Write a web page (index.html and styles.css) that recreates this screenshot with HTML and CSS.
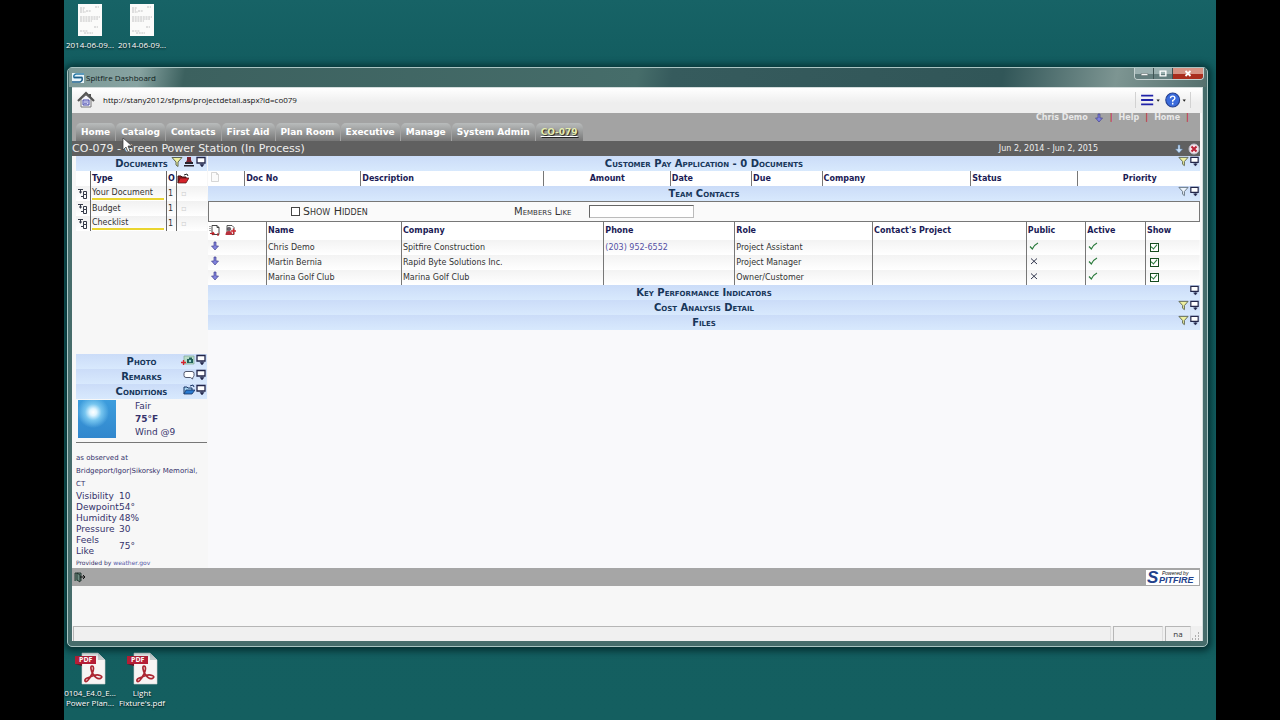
FILE: index.html
```html
<!DOCTYPE html>
<html lang="en">
<head>
<meta charset="utf-8">
<title>Spitfire Dashboard</title>
<link rel="stylesheet" href="styles.css">
</head>
<body>
<svg class="defs" aria-hidden="true">
  <symbol id="funnel" viewBox="0 0 12 12"><path d="M1 1.500h10L7 6v4.500L5 9V6z" fill="#eef0a0" stroke="#5d6650"/></symbol>
  <symbol id="funnel-clear" viewBox="0 0 12 12"><path d="M1 1.500h10L7 6v4.500L5 9V6z" fill="#eef5fc" stroke="#60707c"/></symbol>
  <symbol id="drop" viewBox="0 0 12 12"><path d="M2 1.500h8v5.500H2z" fill="#fff" stroke="#22264a" stroke-width="1.300"/><path d="M7 7v2M5 8.500h4L7 11z" fill="#22264a" stroke="#22264a" stroke-width=".5"/></symbol>
  <symbol id="stamp" viewBox="0 0 12 12"><path d="M4 1h4v3l1 2H3l1-2z" fill="#7b2431"/><path d="M2 6h8v2H2zM1 9h10v1.500H1z" fill="#26232e"/></symbol>
  <symbol id="folder-red" viewBox="0 0 12 12"><path d="M1 10V3h3l1 1h4v2" fill="#9c171c" stroke="#3a1515"/><path d="M1 10l2-5h9l-3 5z" fill="#d4232a" stroke="#4a1212" stroke-width=".7"/><path d="M7 2l3-1 1 2" fill="none" stroke="#222"/></symbol>
  <symbol id="folder-blue" viewBox="0 0 12 12"><path d="M1 10V3h3l1 1h4v2" fill="#a8d4f2" stroke="#173463"/><path d="M1 10l2-4h9l-3 4z" fill="#2b7bd0" stroke="#173463" stroke-width=".8"/><path d="M7 2l3-1 1 2" fill="none" stroke="#173463"/></symbol>
  <symbol id="photo" viewBox="0 0 14 12"><path d="M3 2h10v8H3z" fill="#b9dcc7" stroke="#7da795" stroke-width=".7"/><path d="M6 5h6v4H6zM8 3.500h3V5H8z" fill="#1f5f58"/><circle cx="9" cy="7" r="1.200" fill="#a7d8d7"/><path d="M0 8.500h5M2.500 6v5" stroke="#d5222c" stroke-width="1.300"/></symbol>
  <symbol id="bubble" viewBox="0 0 12 12"><path d="M3 2.500h6a2 2 0 0 1 2 2v2a2 2 0 0 1-1 1.600L9.500 10 7.500 8.500H3a2 2 0 0 1-2-2v-2a2 2 0 0 1 2-2z" fill="#fff" stroke="#40465e" stroke-width=".9"/></symbol>
  <symbol id="tree" viewBox="0 0 12 12"><path d="M2 1.500h5M4.500 1.500v4M3 4h3M7.500 3.500h3v3h-3zM7.500 6.500h3v4h-3zM5 8.500h2.500" fill="none" stroke="#343a48"/></symbol>
  <symbol id="down" viewBox="0 0 10 10"><path d="M4 1h2v4h2.500L5 9 1.500 5H4z" fill="#7f82dc" stroke="#45448f" stroke-width=".7"/></symbol>
  <symbol id="down-light" viewBox="0 0 10 10"><path d="M4 1h2v4h2.500L5 9 1.500 5H4z" fill="#c6ddf5" stroke="#5a83ad" stroke-width=".5"/></symbol>
  <symbol id="page" viewBox="0 0 10 12"><path d="M1.500 1.500h5l2 2v7h-7zM6.500 1.500v2h2" fill="#fbfbfb" stroke="#ccc" stroke-width=".8"/></symbol>
  <symbol id="page-add" viewBox="0 0 12 12"><path d="M3 1.500h5l2 2v7H3zM8 1.500v2h2" fill="#fff" stroke="#333" stroke-width=".9"/><path d="M1 2v6" stroke="#555" stroke-dasharray="1 1"/><path d="M1 9.500h4M3.500 8L5 9.500 3.500 11M9 9v3" stroke="#bd2026" fill="none" stroke-width="1.200"/></symbol>
  <symbol id="people-add" viewBox="0 0 12 12"><path d="M3 1.500h5l2 2v7H3z" fill="#fff" stroke="#444" stroke-width=".9"/><circle cx="5" cy="5" r="1.800" fill="#6a6370" stroke="#333" stroke-width=".5"/><path d="M1.500 11q0-4 3.500-4t3 4z" fill="#b8323e"/><path d="M7 7h5M9.500 4.500v6" stroke="#cc2831" stroke-width="1.400"/></symbol>
  <symbol id="check" viewBox="0 0 10 10"><path d="M1 5.500L3.300 8Q5 4 9 2" fill="none" stroke="#28793a" stroke-width="1.200"/></symbol>
  <symbol id="cross" viewBox="0 0 10 10"><path d="M2 2.500l6 5.500M8 2.500L2 8" fill="none" stroke="#33384f"/></symbol>
  <symbol id="pdf" viewBox="0 0 32 34"><path d="M8 1h16l7 7v24H8z" fill="#f7f5f4" stroke="#d5d5d5" stroke-width=".6"/><path d="M24 1v7h7z" fill="#c7cecf"/><path d="M1 4h21v8H1z" fill="#b51e36"/><path d="M1 12h7v2z" fill="#6c1422"/><path d="M18 14c-2 0-1 5 1 8s5 6 8 4-3-4-7-2.500-10 3-9 5.500 5-3 7-7 2-8 0-8z" fill="none" stroke="#ac2631" stroke-width="1.700"/></symbol>
  <symbol id="doc" viewBox="0 0 26 34"><path d="M1 1h24v32H1z" fill="#fbfbfa"/><path d="M3 5h5M3 7h4M3 9h6M9 8h5M18 4h4M3 14h20M3 16h18M3 18h12M17 24h4M3 28h8M7 30h9" stroke="#aaa" stroke-width=".7" stroke-dasharray="2 .7"/></symbol>
  <symbol id="spitfire" viewBox="0 0 12 12"><path d="M0 1h12v10H0z" fill="#e9f5fb"/><path d="M12 2H4Q1 3 2 5.500h8" fill="none" stroke="#2b7ba6" stroke-width="1.500"/><path d="M0 10h8q3-1 2-4.500H2" fill="none" stroke="#1d5f8a" stroke-width="1.500"/></symbol>
</svg>

<main class="desktop">
  <div class="files files-top">
    <figure class="file"><svg class="doc-icon"><use href="#doc"/></svg><figcaption>2014-06-09...</figcaption></figure>
    <figure class="file"><svg class="doc-icon"><use href="#doc"/></svg><figcaption>2014-06-09...</figcaption></figure>
  </div>
  <div class="files files-bottom">
    <figure class="file"><span class="pdf"><svg class="pdf-icon"><use href="#pdf"/></svg><span class="pdf-tag">PDF</span></span><figcaption>0104_E4.0_E...<br>Power Plan...</figcaption></figure>
    <figure class="file"><span class="pdf"><svg class="pdf-icon"><use href="#pdf"/></svg><span class="pdf-tag">PDF</span></span><figcaption>Light<br>Fixture's.pdf</figcaption></figure>
  </div>

  <section class="window">
    <header class="titlebar">
      <svg class="i12"><use href="#spitfire"/></svg><span class="caption">Spitfire Dashboard</span>
      <div class="controls">
        <button aria-label="Minimize"><svg viewBox="0 0 19 11"><path d="M6.500 5.500h7v2h-7z" fill="#fff" stroke="#4c5a5a" stroke-width=".5"/></svg></button>
        <button aria-label="Maximize"><svg viewBox="0 0 19 11"><path d="M6.500 3h6v5h-6z" fill="none" stroke="#fff" stroke-width="1.500"/></svg></button>
        <button class="close" aria-label="Close"><svg viewBox="0 0 30 11"><path d="M12.500 3l5 5M17.500 3l-5 5" stroke="#fff" stroke-width="1.800"/></svg></button>
      </div>
    </header>

    <div class="client">
      <div class="toolbar">
        <svg class="home" viewBox="0 0 18 18"><path d="M13 3v4" stroke="#555" stroke-width="2"/><path d="M4 8v8h10V8L9 4z" fill="#f4f4fa" stroke="#777"/><path d="M1 10l8-8 8 8" fill="none" stroke="#555" stroke-width="2.200"/><path d="M6 9h6v5H6z" fill="#dedff8" stroke="#4547a7"/><path d="M7 11h4M7 12.500h3" stroke="#5a5cb6" stroke-width=".7"/></svg>
        <span class="url">http://stany2012/sfpms/projectdetail.aspx?id=co079</span>
        <div class="tools">
          <button aria-label="Menu"><svg viewBox="0 0 20 14"><path d="M1 3h11M1 7h11M1 11h11" stroke="#2023a8" stroke-width="1.700"/><path d="M15 6.500h3l-1.500 2z" fill="#222"/></svg></button>
          <button aria-label="Help"><svg viewBox="0 0 20 14"><circle cx="7" cy="7" r="6.300" fill="#3a6bdc" stroke="#27418f"/><path d="M5 5.500Q5 3.500 7 3.500t2 2Q9 6.500 7 7.500v1M7 9.500v1.500" fill="none" stroke="#fff" stroke-width="1.300"/><path d="M16 6.500h3L17.500 8.500z" fill="#222"/></svg></button>
        </div>
      </div>

      <div class="page">
        <div class="masthead">
          <div class="user"><a href="#">Chris Demo</a><svg class="i10"><use href="#down"/></svg><i>|</i><a href="#">Help</a><i>|</i><a href="#">Home</a><i>|</i></div>
          <nav class="tabs">
            <a href="#">Home</a><a href="#">Catalog</a><a href="#">Contacts</a><a href="#">First Aid</a><a href="#">Plan Room</a><a href="#">Executive</a><a href="#">Manage</a><a href="#">System Admin</a><a href="#" class="current">CO-079</a>
          </nav>
        </div>
        <div class="project">
          <h1>CO-079 - Green Power Station (In Process)</h1>
          <span class="dates">Jun 2, 2014 - Jun 2, 2015</span>
          <svg class="i10"><use href="#down-light"/></svg>
          <button class="icon-btn" aria-label="Close project"><svg class="i12" viewBox="0 0 12 12"><circle cx="6" cy="6" r="5" fill="#f7e4e8" stroke="#b8bac9"/><path d="M3.500 3.500l5 5M8.500 3.500l-5 5" stroke="#b92238" stroke-width="2"/></svg></button>
        </div>

        <div class="content">
          <aside class="side">
            <h2 class="bar"><span>Documents</span><b class="icons"><svg><use href="#funnel"/></svg><svg><use href="#stamp"/></svg><svg><use href="#drop"/></svg></b></h2>
            <table class="docs">
              <colgroup><col class="d1"><col class="d2"><col class="d3"><col class="d4"></colgroup>
              <thead><tr><th></th><th>Type</th><th>O</th><th><svg class="i12"><use href="#folder-red"/></svg></th></tr></thead>
              <tbody>
                <tr><td><svg class="i12"><use href="#tree"/></svg></td><td><span class="mark">Your Document</span></td><td>1</td><td class="dot">▫</td></tr>
                <tr><td><svg class="i12"><use href="#tree"/></svg></td><td>Budget</td><td>1</td><td class="dot">▫</td></tr>
                <tr><td><svg class="i12"><use href="#tree"/></svg></td><td><span class="mark">Checklist</span></td><td>1</td><td class="dot">▫</td></tr>
              </tbody>
            </table>
            <div class="lower">
              <h2 class="bar"><span>Photo</span><b class="icons"><svg class="wide"><use href="#photo"/></svg><svg><use href="#drop"/></svg></b></h2>
              <h2 class="bar"><span>Remarks</span><b class="icons"><svg><use href="#bubble"/></svg><svg><use href="#drop"/></svg></b></h2>
              <h2 class="bar"><span>Conditions</span><b class="icons"><svg><use href="#folder-blue"/></svg><svg><use href="#drop"/></svg></b></h2>
              <div class="weather"><div class="sky"></div><p>Fair<br><strong>75°F</strong><br>Wind @9</p></div>
              <p class="observed">as observed at<br>Bridgeport/Igor|Sikorsky Memorial, CT</p>
              <table class="facts">
                <tr><td>Visibility</td><td>10</td></tr><tr><td>Dewpoint</td><td>54°</td></tr><tr><td>Humidity</td><td>48%</td></tr><tr><td>Pressure</td><td>30</td></tr><tr><td>Feels<br>Like</td><td>75°</td></tr>
              </table>
              <p class="credit">Provided by <a href="#">weather.gov</a></p>
            </div>
          </aside>

          <div class="panels">
            <h2 class="bar"><span>Customer Pay Application - 0 Documents</span><b class="icons"><svg><use href="#funnel"/></svg><svg><use href="#drop"/></svg></b></h2>
            <table class="grid pay">
              <colgroup><col class="p1"><col class="p2"><col class="p3"><col class="p4"><col class="p5"><col class="p6"><col class="p7"><col class="p8"><col></colgroup>
              <tr><th><svg class="i12"><use href="#page"/></svg></th><th>Doc No</th><th>Description</th><th class="mid">Amount</th><th>Date</th><th>Due</th><th>Company</th><th>Status</th><th class="mid">Priority</th></tr>
            </table>
            <h2 class="bar"><span>Team Contacts</span><b class="icons"><svg><use href="#funnel-clear"/></svg><svg><use href="#drop"/></svg></b></h2>
            <form class="search">
              <label class="hidden-opt"><input type="checkbox">Show Hidden</label>
              <label class="like">Members Like<input type="text"></label>
            </form>
            <table class="grid team">
              <colgroup><col class="t1"><col class="t2"><col class="t3"><col class="t4"><col class="t5"><col class="t6"><col class="t7"><col class="t8"><col></colgroup>
              <thead><tr><th><svg class="i12"><use href="#page-add"/></svg> <svg class="i12"><use href="#people-add"/></svg></th><th>Name</th><th>Company</th><th>Phone</th><th>Role</th><th>Contact's Project</th><th>Public</th><th>Active</th><th>Show</th></tr></thead>
              <tbody>
                <tr><td><svg class="i10"><use href="#down"/></svg></td><td>Chris Demo</td><td>Spitfire Construction</td><td><a href="#">(203) 952-6552</a></td><td>Project Assistant</td><td></td><td><svg class="i10"><use href="#check"/></svg></td><td><svg class="i10"><use href="#check"/></svg></td><td><input type="checkbox" checked aria-label="Show Chris Demo"></td></tr>
                <tr><td><svg class="i10"><use href="#down"/></svg></td><td>Martin Bernia</td><td>Rapid Byte Solutions Inc.</td><td></td><td>Project Manager</td><td></td><td><svg class="i10"><use href="#cross"/></svg></td><td><svg class="i10"><use href="#check"/></svg></td><td><input type="checkbox" checked aria-label="Show Martin Bernia"></td></tr>
                <tr><td><svg class="i10"><use href="#down"/></svg></td><td>Marina Golf Club</td><td>Marina Golf Club</td><td></td><td>Owner/Customer</td><td></td><td><svg class="i10"><use href="#cross"/></svg></td><td><svg class="i10"><use href="#check"/></svg></td><td><input type="checkbox" checked aria-label="Show Marina Golf Club"></td></tr>
              </tbody>
            </table>
            <h2 class="bar"><span>Key Performance Indicators</span><b class="icons"><svg><use href="#drop"/></svg></b></h2>
            <h2 class="bar"><span>Cost Analysis Detail</span><b class="icons"><svg><use href="#funnel"/></svg><svg><use href="#drop"/></svg></b></h2>
            <h2 class="bar"><span>Files</span><b class="icons"><svg><use href="#funnel"/></svg><svg><use href="#drop"/></svg></b></h2>
          </div>
        </div>

        <footer class="foot">
          <button class="icon-btn" aria-label="Exit"><svg class="i12" viewBox="0 0 12 12"><path d="M2 10V2h6v8M4 2l3 2v7L4 9z" fill="#6d8c82" stroke="#1e2c28" stroke-width=".9"/><path d="M7 6h5M10 4l2 2-2 2" fill="none" stroke="#111"/></svg></button>
          <div class="brand"><b class="initial">S</b><span class="powered">Powered by</span><span class="word">PITFIRE</span></div>
        </footer>
      </div>
      <div class="status"><span></span><span class="s2"></span><span class="s3">na</span><svg class="i10" viewBox="0 0 10 10"><path d="M7 2h1M4 5h1M7 5h1M1 8h1M4 8h1M7 8h1" stroke="#999" stroke-width="1.500"/></svg></div>
    </div>
  </section>

  <svg class="cursor" viewBox="0 0 12 18"><path d="M1 1v12l3-3 2 5 2-1-2-5h4z" fill="#fff" stroke="#333" stroke-width=".7"/></svg>
</main>
</body>
</html>
```
FILE: styles.css
```css
* { box-sizing: border-box; }
body { margin: 0; background: #000; font: 8px/14px "DejaVu Sans", Verdana, sans-serif; color: #333; }
a { color: inherit; text-decoration: none; }
h1, h2, p, figure { margin: 0; }
button { border: 0; padding: 0; background: none; display: flex; }
table { border-collapse: collapse; table-layout: fixed; width: 100%; }
th, td { padding: 0; text-align: left; }
.defs { position: absolute; width: 0; height: 0; }
.i12 { width: 12px; height: 12px; vertical-align: middle; flex: none; }
.i10 { width: 10px; height: 10px; vertical-align: middle; flex: none; }

.desktop { position: relative; margin: 0 5%; min-height: 100vh; background: linear-gradient(#176366, #125c5f 10%, #145f60); overflow: hidden; }
.files { position: absolute; left: 0; display: flex; }
.files-top { top: 3px; }
.files-bottom { top: 652px; }
.file { width: 52px; display: flex; flex-direction: column; align-items: center; color: #fff; font: 8px/10px "Open Sans", "Noto Sans", sans-serif; text-align: center; text-shadow: 0 1px 2px #000; white-space: nowrap; }
.doc-icon { width: 26px; height: 34px; margin-bottom: 3px; }
.pdf { position: relative; display: block; width: 32px; height: 34px; margin-bottom: 2px; }
.pdf-icon { width: 32px; height: 34px; }
.pdf-tag { position: absolute; left: 5px; top: 3px; font: bold 7px/10px "Open Sans", sans-serif; text-shadow: none; }

.window { position: absolute; left: 3px; right: 8px; top: 67px; bottom: 73px; display: flex; flex-direction: column; padding: 1px 4px 5px; border: 1px solid #a9c4c2; border-radius: 5px; background: #466c6b; box-shadow: 0 1px 7px 3px #052f31; }
.titlebar { display: flex; align-items: center; gap: 2px; height: 19px; flex: none; margin: -1px -3px 0; padding-left: 3px; background: linear-gradient(100deg, #7d9a98 0, #87a3a1 70px, #3c615f 115px, #466d6a 50%, #365b5d 53%, #315658 82%, #7d9592 92%, #56706e); }
.caption { font: 8px/14px "Open Sans", "Noto Sans", sans-serif; color: #101c1c; }
.controls { display: flex; align-self: flex-start; margin-left: auto; margin-right: 2px; border: 1px solid #c5d1d1; border-top: 0; border-radius: 0 0 4px 4px; overflow: hidden; }
.controls button { width: 19px; height: 11px; border-right: 1px solid #3f5353; background: linear-gradient(#9bb0b0 50%, #647e7e 50%); }
.controls svg { width: 100%; height: 11px; }
.controls .close { width: 30px; border-right: 0; background: linear-gradient(#d69384 50%, #aa2d1d 50%); }

.client { flex: 1; min-height: 0; display: flex; flex-direction: column; background: #f7f7f7; border: solid #d4dddd; border-width: 1px 1px 0 0; }
.toolbar { display: flex; align-items: center; height: 25px; flex: none; padding: 0 0 2px 5px; background: linear-gradient(#fff, #eee 60%); }
.home { width: 18px; height: 18px; margin-right: 8px; }
.url { font: 8px/14px "Open Sans", "Noto Sans", sans-serif; color: #111; }
.tools { display: flex; gap: 3px; margin-left: auto; margin-right: 11px; padding: 0 3px 0 4px; border: solid #d2d2d2; border-width: 0 1px; }
.tools svg { width: 22px; height: 16px; }

.page { flex: 1; margin-right: 2px; }
.masthead { height: 28px; background: #a3a3a3; display: flex; flex-direction: column; justify-content: space-between; }
.user { display: flex; align-items: center; justify-content: flex-end; height: 10px; padding-right: 11px; color: #e8e8e8; font-weight: bold; gap: 6px; white-space: nowrap; }
.user i { font-style: normal; color: #cc3040; }
.tabs { display: flex; gap: 1px; padding-left: 4px; white-space: nowrap; }
.tabs a { height: 18px; padding: 0 5px; border-radius: 5px 5px 0 0; font: bold 9px/19px "DejaVu Sans", Verdana, sans-serif; color: #fff; background: linear-gradient(#b9bcbc, #777); }
.tabs .current { color: #e5ecae; text-decoration: underline; text-decoration-color: #fff; text-shadow: 1px 1px 1px #222; }
.project { display: flex; align-items: center; height: 15px; background: #606060; color: #eee; }
.project h1 { font: 11px/15px "DejaVu Sans", Verdana, sans-serif; white-space: nowrap; }
.dates { margin-left: auto; margin-right: 76px; line-height: 16px; }
.project .icon-btn { margin: 0 0 0 4px; }

.content { display: flex; padding: 0 0 0 4px; }
.side { width: 131px; flex: none; margin-right: 1px; display: flex; flex-direction: column; }
.panels { flex: 1; min-width: 0; background: #f9f9fb; }
.bar { display: grid; grid-template-columns: 1fr; align-items: center; height: 15px; font: bold small-caps 10px/15px "DejaVu Sans", Verdana, sans-serif; color: #173659; text-align: center; background: linear-gradient(#cbdcf8, #d8e9fd); white-space: nowrap; }
.bar > * { grid-area: 1 / 1; }
.icons { justify-self: end; align-self: start; display: flex; align-items: center; }
.icons svg { width: 12px; height: 12px; }
.icons .wide { width: 14px; }
.panels .icons svg { width: 11px; height: 11px; }
.docs { background: #fff; color: #333; }
.docs tr { height: 15px; }
.docs th { color: #17174f; }
.docs th + th, .docs td + td { border-left: 1px solid #666; padding-left: 1px; }
.docs th:last-child, .docs td:last-child { padding-left: 0; }
.docs svg { display: block; }
.docs tbody tr { background: linear-gradient(#f1f1f1, #fff); }
.d1 { width: 11%; } .d2 { width: 58%; } .d3 { width: 8%; } .d4 { width: 23%; }
.mark { display: block; height: 13px; line-height: 12px; margin-right: 2px; border-bottom: 2px solid #ead52f; }
.docs td.dot { color: #ccc; padding-left: 4px; }

.lower { margin-top: 123px; color: #35326b; }
.weather { display: flex; padding: 1px 2px 4px; border-bottom: 1px solid #777; height: 44px; }
.sky { width: 38px; height: 38px; background: radial-gradient(circle at 40% 32%, #fff 0, #e0f5ff 10%, #76c5ef 24%, transparent 46%), linear-gradient(#3d9ddd, #3187cd); }
.weather p { margin-left: 19px; font-size: 9px; line-height: 13px; }
.observed { padding-top: 9px; font-size: 7px; line-height: 13px; }
.facts { font-size: 9px; line-height: 11px; width: 70px; }
.facts td:first-child { width: 43px; }
.credit { font-size: 6px; line-height: 11px; }
.credit a { color: #5558a8; }

.grid { background: #fff; }
.grid th { color: #1b1b55; }
.grid th + th, .grid td + td { border-left: 1px solid #777; padding-left: 1px; }
.grid th:first-child, .grid td:first-child { padding-left: 1px; }
.grid svg { margin-top: -2px; }
.grid .mid { text-align: center; }
.pay tr { height: 15px; }
.p1 { width: 3.700%; } .p2 { width: 11.700%; } .p3 { width: 18.400%; } .p4 { width: 12.800%; } .p5 { width: 8.200%; } .p6 { width: 7.100%; } .p7 { width: 15%; } .p8 { width: 10.800%; }
.team thead tr { height: 18px; }
.team tbody tr { height: 15px; background: linear-gradient(#f3f3f3, #fff); }
.t1 { width: 5.900%; } .t2 { width: 13.600%; } .t3 { width: 20.400%; } .t4 { width: 13.200%; } .t5 { width: 13.900%; } .t6 { width: 15.500%; } .t7 { width: 6%; } .t8 { width: 6%; }
.team a { color: #5450a4; }
.team tbody svg { margin-left: 1px; }
.search { display: flex; align-items: center; height: 21px; border: 1px solid #777; background: #fafafa; font-variant: small-caps; font-size: 10px; }
.search label { display: flex; align-items: center; }
.hidden-opt { width: 305px; padding-left: 82px; font-size: 11px; }
.like { gap: 18px; }
.search input[type="text"] { width: 105px; height: 13px; border: 1px solid #bbb; border-top-color: #666; border-left-color: #666; background: #fff; padding: 0; }
input[type="checkbox"] { appearance: none; width: 9px; height: 9px; margin: 0; border: 1px solid #444; background: #fff; }
.search input[type="checkbox"] { margin-right: 3px; }
.team input[type="checkbox"] { display: grid; place-items: center; margin: -1px 0 0 3px; border-color: #164d20; }
.team input:checked::after { content: ""; width: 3px; height: 5px; margin-top: -2px; border: solid #28793a; border-width: 0 1px 1px 0; transform: rotate(40deg); }

.foot { display: flex; justify-content: space-between; align-items: center; height: 18px; padding: 0 1px; background: #a6a6a6; }
.brand { display: grid; grid-template: 6px 9px / 13px 1fr; width: 53px; background: #fff; color: #23418b; white-space: nowrap; font-family: "Liberation Sans", Arial, sans-serif; font-style: italic; }
.initial { grid-row: 1 / 3; padding-left: 1px; font-size: 17px; line-height: 15px; }
.powered { padding-left: 3px; font-size: 5px; line-height: 6px; color: #111; }
.word { font-size: 9px; line-height: 9px; font-weight: bold; }
.status { display: flex; gap: 2px; flex: none; height: 15px; padding: 0 1px; background: #f0f0f0; font: 8px/14px "Open Sans", sans-serif; }
.status span { flex: 1; border: solid #b6b6b6; border-width: 1px 0 0 1px; border-right: 1px solid #ddd; }
.status .s2 { flex: 0 0 50px; }
.status .s3 { flex: 0 0 26px; text-align: center; }
.status svg { align-self: flex-end; margin-left: -2px; }
.cursor { position: absolute; left: 58px; top: 137px; width: 12px; height: 18px; }
```
